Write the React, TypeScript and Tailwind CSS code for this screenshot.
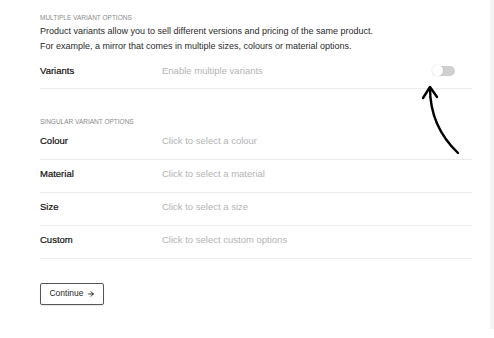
import React from 'react'
import { ArrowRight } from 'lucide-react'

const rows = [
  { label: 'Colour', hint: 'Click to select a colour' },
  { label: 'Material', hint: 'Click to select a material' },
  { label: 'Size', hint: 'Click to select a size' },
  { label: 'Custom', hint: 'Click to select custom options' },
]

const Row: React.FC<{ label: string; hint: string; children?: React.ReactNode }> = ({ label, hint, children }) => (
  <div className="flex h-[33px] items-center border-b border-[#ececec] pb-[2px]">
    <span className="w-[122px] text-[9.5px] text-[#111] [-webkit-text-stroke:0.2px_#111]">{label}</span>
    <span className="flex-1 text-[9.5px] text-[#b3b3b3]">{hint}</span>
    {children}
  </div>
)

export default function App() {
  return (
    <div className="flex w-[494px] h-[338px] bg-white" style={{ fontFamily: '"Liberation Sans", Arial, sans-serif' }}>
      <div className="relative w-[490px] px-[40px] pr-[18px] pt-[13px]">
        <p className="text-[6.5px] uppercase text-[#8a8a8a]">Multiple variant options</p>
        <p className="mt-[1px] text-[9px] leading-[15px] text-[#2a2a2a]">
          Product variants allow you to sell different versions and pricing of the same product.
          <br />
          For example, a mirror that comes in multiple sizes, colours or material options.
        </p>
        <div className="mt-[2px]">
          <Row label="Variants" hint="Enable multiple variants">
            <div className="mr-[17px] flex h-[10px] w-[23px] items-center rounded-full bg-[#cfcfcf]">
              <span className="h-[11px] w-[11px] rounded-full bg-white shadow-[0_0_2px_rgba(0,0,0,0.15)]" />
            </div>
          </Row>
        </div>
        <p className="mt-[28px] text-[6.5px] uppercase text-[#8a8a8a]">Singular variant options</p>
        <div>
          {rows.map(r => (
            <Row key={r.label} label={r.label} hint={r.hint} />
          ))}
        </div>
        <button className="mt-[24px] flex h-[22px] w-[64px] items-center justify-center gap-[3px] rounded-[2px] border border-[#555] text-[8.5px] text-[#1f1f1f] shadow-[0_1px_1px_rgba(0,0,0,0.1)]">
          Continue
          <ArrowRight size={8} strokeWidth={2.6} className="text-[#111]" />
        </button>
        <svg className="absolute left-[418px] top-[82px]" width="50" height="76" viewBox="0 0 50 76" fill="none">
          <path d="M12 6 C 12 30, 20 52, 40 71" stroke="#000" strokeWidth="2.4" strokeLinecap="round" />
          <path d="M5 16 L12 5 L19 15" stroke="#000" strokeWidth="2.4" strokeLinecap="round" strokeLinejoin="round" />
        </svg>
      </div>
      <div className="h-[329px] w-[4px] bg-[#f4f4f4]" />
    </div>
  )
}
